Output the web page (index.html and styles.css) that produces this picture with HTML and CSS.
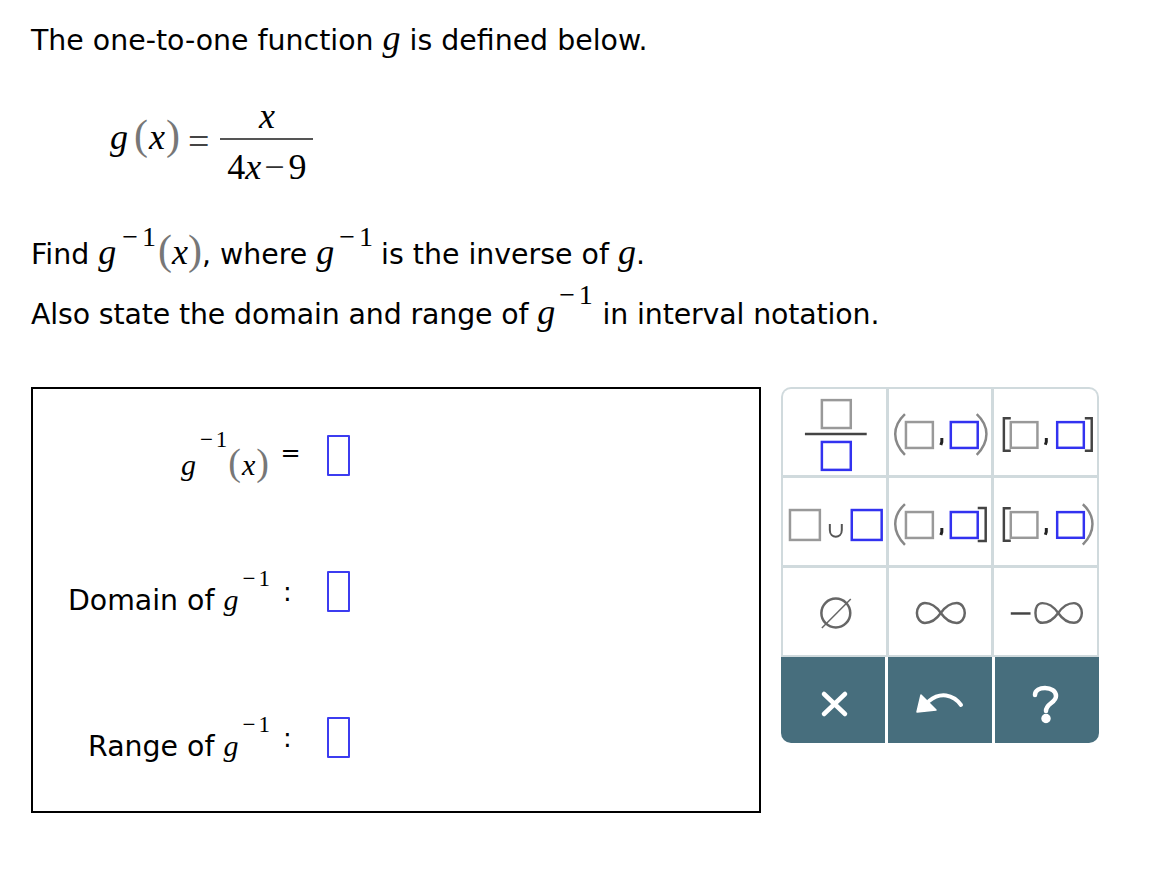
FILE: index.html
```html
<!DOCTYPE html>
<html lang="en">
<head>
<meta charset="utf-8">
<title>Inverse function</title>
<link rel="stylesheet" href="styles.css">
</head>
<body>
<main class="page">
  <p class="line intro">The one-to-one function <i class="mv">g</i> is defined below.</p>
  <div class="formula">
    <span class="lhs"><i class="mv">g</i><span class="paren p-a">(</span><i class="mv">x</i><span class="paren p-b">)</span></span>
    <span class="eq">=</span>
    <span class="frac">
      <span class="num"><i class="mv">x</i></span>
      <span class="den"><span class="mn">4</span><i class="mv">x</i><span class="mn minus">−</span><span class="mn">9</span></span>
    </span>
  </div>
  <p class="line find">Find <i class="mv">g</i><span class="sup"><span class="m">−</span>1</span><span class="paren p-c">(</span><i class="mv">x</i><span class="paren p-d">)</span>, where <i class="mv">g</i><span class="sup s2"><span class="m">−</span>1</span> is the inverse of <i class="mv">g</i>.</p>
  <p class="line also">Also state the domain and range of <i class="mv">g</i><span class="sup s3"><span class="m">−</span>1</span> in interval notation.</p>

  <section class="work">
    <div class="answers">
      <div class="row r1">
        <span class="label"><i class="mv">g</i><span class="sup small"><span class="m">−</span>1</span><span class="paren p-e">(</span><i class="mv mx">x</i><span class="paren p-e">)</span></span>
        <span class="sign">=</span>
        <span class="slot"></span>
      </div>
      <div class="row r2">
        <span class="label">Domain of <i class="mv ms">g</i><span class="sup small"><span class="m">−</span>1</span></span>
        <span class="sign colon">:</span>
        <span class="slot"></span>
      </div>
      <div class="row r3">
        <span class="label">Range of <i class="mv ms">g</i><span class="sup small"><span class="m">−</span>1</span></span>
        <span class="sign colon">:</span>
        <span class="slot"></span>
      </div>
    </div>

    <div class="palette">
      <div class="keys">
        <div class="key"><svg viewBox="783 389 103 86">
          <rect class="g" x="822" y="400" width="29" height="28"/><path class="bar" d="M805 434H867"/><rect class="b" x="822" y="442" width="29" height="28"/></svg></div>
        <div class="key"><svg viewBox="889 389 103 86">
          <path class="pr" d="M905 414C892 426 892 442 905 455"/><rect class="g" x="906" y="422" width="27" height="26"/><path class="cm" d="M942 438v4l-1 3"/><rect class="b" x="951" y="422" width="27" height="26"/><path class="pr" d="M977 414C990 426 990 442 977 455"/></svg></div>
        <div class="key"><svg viewBox="994 389 104 86">
          <path class="br" d="M1011 418H1004V451H1011"/><rect class="g" x="1011" y="422" width="27" height="26"/><path class="cm" d="M1047 438v4l-1 3"/><rect class="b" x="1058" y="422" width="27" height="26"/><path class="br" d="M1086 418H1093V451H1086"/></svg></div>
        <div class="key"><svg viewBox="783 478 103 87">
          <rect class="g" x="790" y="510" width="30" height="30"/><path class="un" d="M830 524V530C830 539 842 539 842 530V524"/><rect class="b" x="852" y="510" width="30" height="30"/></svg></div>
        <div class="key"><svg viewBox="889 478 103 87">
          <path class="pr" d="M905 504C892 516 892 532 905 545"/><rect class="g" x="906" y="512" width="27" height="26"/><path class="cm" d="M942 528v4l-1 3"/><rect class="b" x="951" y="512" width="27" height="26"/><path class="br" d="M978 508H986V541H978"/></svg></div>
        <div class="key"><svg viewBox="994 478 104 87">
          <path class="br" d="M1011 508H1004V541H1011"/><rect class="g" x="1011" y="512" width="27" height="26"/><path class="cm" d="M1047 528v4l-1 3"/><rect class="b" x="1058" y="512" width="27" height="26"/><path class="pr" d="M1084 504C1097 516 1097 532 1084 545"/></svg></div>
        <div class="key"><svg viewBox="783 568 103 87">
          <circle class="sym" cx="836" cy="613" r="14.5"/><path class="sym thin" d="M822 628L851 599"/></svg></div>
        <div class="key"><svg viewBox="889 568 103 87">
          <path class="sym" d="M941 613C934 603 928 603 925 603C920 603 917 608 917 613C917 618 920 623 925 623C928 623 934 623 941 613C948 603 954 603 957 603C962 603 965 608 965 613C965 618 962 623 957 623C954 623 948 623 941 613Z"/></svg></div>
        <div class="key"><svg viewBox="994 568 104 87">
          <path class="bar" d="M1011 613.500H1031"/><path class="sym" d="M1059 613C1052 603 1046 603 1043 603C1038 603 1036 608 1036 613C1036 618 1038 623 1043 623C1046 623 1052 623 1059 613C1066 603 1072 603 1075 603C1080 603 1083 608 1083 613C1083 618 1080 623 1075 623C1072 623 1066 623 1059 613Z"/></svg></div>
      </div>
      <div class="actions">
        <button class="act" aria-label="Clear"><svg viewBox="781 657 104 86"><path class="wh" d="M824 694L845 714M845 694L824 714"/></svg></button>
        <button class="act" aria-label="Undo"><svg viewBox="888 657 104 86"><path class="wh thin2" d="M929 701C940 692 953 694 961 705"/><path class="fill" d="M921 695L917 712L936 710Z" /></svg></button>
        <button class="act" aria-label="Help"><svg viewBox="995 657 104 86"><path class="wh" d="M1035 695C1035 690 1040 688 1045 688C1051 688 1056 691 1056 696C1056 703 1046 703 1046 711"/><circle class="fillc" cx="1046" cy="718.500" r="4"/></svg></button>
      </div>
    </div>
  </section>
</main>
</body>
</html>
```
FILE: styles.css
```css
* { box-sizing: border-box; }
html, body { margin: 0; padding: 0; background: #fff; }
body { font-family: "DejaVu Sans", Verdana, sans-serif; color: #000; }
.page { width: 1152px; height: 886px; padding: 23px 0 0 31px; overflow: hidden; }

.line { margin: 0; font-size: 28.4px; line-height: 36px; white-space: nowrap; }
.mv { font-family: "Liberation Serif", serif; font-style: italic; font-size: 36px; line-height: 0; }
.mn { font-family: "Liberation Serif", serif; font-size: 36px; line-height: 1; }
.paren { font-family: "Liberation Serif", serif; color: #777; font-size: 42px; line-height: 0; font-weight: 400; }
.sup { font-family: "Liberation Serif", serif; font-size: 28px; line-height: 0; vertical-align: 18px; margin-left: 6px; margin-right: 3px; }
.sup .m { margin-right: 4px; }
.s2 { margin-left: 5px; margin-right: -1px; }
.s3 { margin-left: 4px; margin-right: 1px; vertical-align: 20px; }
.p-a { margin: 0 1px 0 6px; }
.p-b { margin-left: 1px; }

.formula { display: flex; align-items: center; margin: 32px 0 0 79px; height: 100px; }
.lhs { white-space: nowrap; display: block; position: relative; top: 2px; }
.eq { font-family: "Liberation Serif", serif; font-size: 38px; margin: 0 11px 0 8px; color: #444; line-height: 1; }
.frac { display: flex; flex-direction: column; align-items: center; width: 93px; }
.num { height: 41px; display: flex; align-items: center; justify-content: center; border-bottom: 2px solid #555; width: 100%; padding-bottom: 4px; }
.den { height: 44px; display: flex; align-items: center; justify-content: center; padding-top: 10px; white-space: nowrap; }
.minus { color: #333; margin: 0 4px 0 3px; }

.find { margin-top: 46px; }
.p-c { margin-left: -1px; }
.also { margin-top: 22px; letter-spacing: -0.13px; }

.work { display: flex; align-items: flex-start; gap: 20px; margin-top: 54px; }
.answers { width: 730px; height: 426px; border: 2px solid #000; position: relative; display: flex; flex-direction: column; padding-top: 46px; }
.row { display: flex; align-items: flex-start; height: 41px; }
.r2 { margin-top: 95px; }
.r3 { margin-top: 105px; }
.label { width: 237px; text-align: right; font-size: 28.4px; line-height: 40px; white-space: nowrap; padding-top: 8px; }
.label .mv { font-size: 30px; margin-right: 4px; }
.label .ms { font-size: 30px; }
.small { font-size: 23px; vertical-align: 24px; margin: 0; }
.small .m { margin-right: 3px; }
.r1 .label { padding-top: 5px; }
.r1 .small { vertical-align: 28px; }
.r1 .mx { margin-right: 0; }
.p-e { font-size: 38px; margin: 0 1px; }
.mx { font-size: 26px; }
.sign { width: 57px; text-align: center; font-size: 24px; line-height: 36px; padding-right: 16px; flex: none; }
.colon { font-size: 26px; padding-top: 3px; padding-right: 22px; }
.slot { width: 23px; height: 41px; border: 2.5px solid #3c3cf0; flex: none; border-radius: 1px; }

.palette { width: 318px; flex: none; }
.keys { display: grid; grid-template-columns: repeat(3, 1fr); grid-template-rows: 86px 87px 87px; gap: 3px; background: #d0dadd; border: 2px solid #d0dadd; border-bottom: 0; border-radius: 10px 10px 0 0; padding-bottom: 2px; overflow: hidden; }
.key { background: #fff; min-width: 0; }
.key svg, .act svg { display: block; width: 100%; height: 100%; }
.actions { display: grid; grid-template-columns: 104px 104px 104px; justify-content: space-between; background: #fff; height: 86px; border-radius: 0 0 10px 10px; overflow: hidden; column-gap: 3px; }
.act { background: #476e7d; border: 0; padding: 0; margin: 0; height: 86px; }

.g { fill: none; stroke: #999; stroke-width: 2.500; }
.b { fill: none; stroke: #3232f0; stroke-width: 2.500; }
.bar { fill: none; stroke: #444; stroke-width: 2.500; }
.pr { fill: none; stroke: #888; stroke-width: 2.500; }
.br { fill: none; stroke: #444; stroke-width: 2.500; }
.cm { fill: none; stroke: #222; stroke-width: 3; }
.un { fill: none; stroke: #555; stroke-width: 2; }
.sym { fill: none; stroke: #666; stroke-width: 2.500; }
.thin { stroke-width: 1.500; }
.wh { fill: none; stroke: #fff; stroke-width: 4.500; stroke-linecap: round; }
.thin2 { stroke-width: 4; }
.fill, .fillc { fill: #fff; stroke: #fff; stroke-width: 1.500; stroke-linejoin: round; }
```
